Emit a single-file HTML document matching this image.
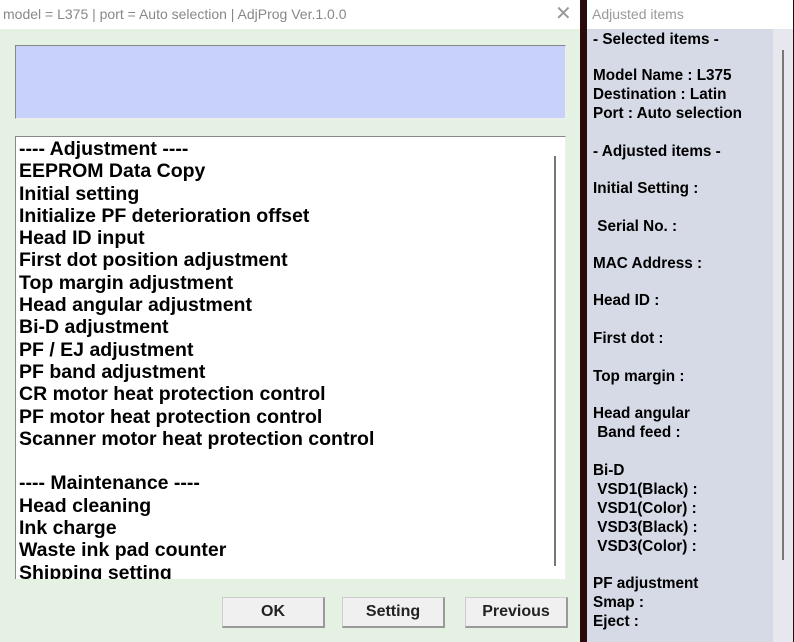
<!DOCTYPE html>
<html><head><style>
*{margin:0;padding:0;box-sizing:border-box}
body{width:794px;height:642px;background:#2a0a0a;position:relative;overflow:hidden;font-family:"Liberation Sans",Arial,sans-serif}
.lw{position:absolute;left:0;top:0;width:580px;height:642px;background:#e5f2e3}
.lt{position:absolute;left:0;top:0;width:580px;height:29px;background:#fff;color:#888;font-size:14px;line-height:29px;padding-left:3px}
.x{position:absolute;left:555px;top:0;font-size:20px;color:#999;line-height:29px}
.blue{position:absolute;left:15px;top:45px;width:551px;height:74px;background:#c7d1fa;border:1px solid #888;border-right-color:#eee;border-bottom-color:#eee}
.list{position:absolute;left:15px;top:136px;width:551px;height:443px;background:#fff;border:1px solid #888;border-right-color:#eee;border-bottom:none;overflow:hidden;padding:1px 0 0 3px;font-weight:bold;font-size:19.5px;line-height:22.3px;color:#000;white-space:nowrap}
.sb{position:absolute;left:554px;top:156px;width:2px;height:410px;background:#777}
.btn{position:absolute;top:597px;width:103px;height:31px;background:#f0f0f0;border:1px solid #ccc;border-right:2px solid #999;border-bottom:2px solid #999;font-weight:bold;font-size:16px;text-align:center;line-height:28px;color:#222}
.rw{position:absolute;left:587px;top:0;width:206px;height:642px;background:#d6dae6}
.rt{position:absolute;left:0;top:0;width:206px;height:29px;background:#fff;color:#999;font-size:14px;line-height:29px;padding-left:5px}
.rs{position:absolute;left:186px;top:29px;width:20px;height:613px;background:#e6e8ee}
.rsl{position:absolute;left:195px;top:50px;width:2px;height:510px;background:#777}
.r{position:absolute;left:6px;font-weight:bold;font-size:15.3px;color:#000;line-height:18.8px;white-space:nowrap}
</style></head><body>
<div class="lw">
<div class="lt">model = L375 | port = Auto selection | AdjProg Ver.1.0.0</div>
<div class="x">✕</div>
<div class="blue"></div>
<div class="list">---- Adjustment ----<br>EEPROM Data Copy<br>Initial setting<br>Initialize PF deterioration offset<br>Head ID input<br>First dot position adjustment<br>Top margin adjustment<br>Head angular adjustment<br>Bi-D adjustment<br>PF / EJ adjustment<br>PF band adjustment<br>CR motor heat protection control<br>PF motor heat protection control<br>Scanner motor heat protection control<br><br>---- Maintenance ----<br>Head cleaning<br>Ink charge<br>Waste ink pad counter<br>Shipping setting</div>
<div class="sb"></div>
<div class="btn" style="left:222px">OK</div>
<div class="btn" style="left:342px">Setting</div>
<div class="btn" style="left:465px">Previous</div>
</div>
<div class="rw">
<div class="rt">Adjusted items</div>
<div class="rs"></div><div class="rsl"></div>
<div class="r" style="top:31px">- Selected items -</div>
<div class="r" style="top:67px">Model Name : L375<br>Destination : Latin<br>Port : Auto selection</div>
<div class="r" style="top:143px">- Adjusted items -</div>
<div class="r" style="top:180px">Initial Setting :</div>
<div class="r" style="top:218px">&nbsp;Serial No. :</div>
<div class="r" style="top:255px">MAC Address :</div>
<div class="r" style="top:292px">Head ID :</div>
<div class="r" style="top:330px">First dot :</div>
<div class="r" style="top:368px">Top margin :</div>
<div class="r" style="top:405px">Head angular<br>&nbsp;Band feed :</div>
<div class="r" style="top:461px;line-height:19px">Bi-D<br>&nbsp;VSD1(Black) :<br>&nbsp;VSD1(Color) :<br>&nbsp;VSD3(Black) :<br>&nbsp;VSD3(Color) :</div>
<div class="r" style="top:574px;line-height:19px">PF adjustment<br>Smap :<br>Eject :</div>
</div>
</body></html>
